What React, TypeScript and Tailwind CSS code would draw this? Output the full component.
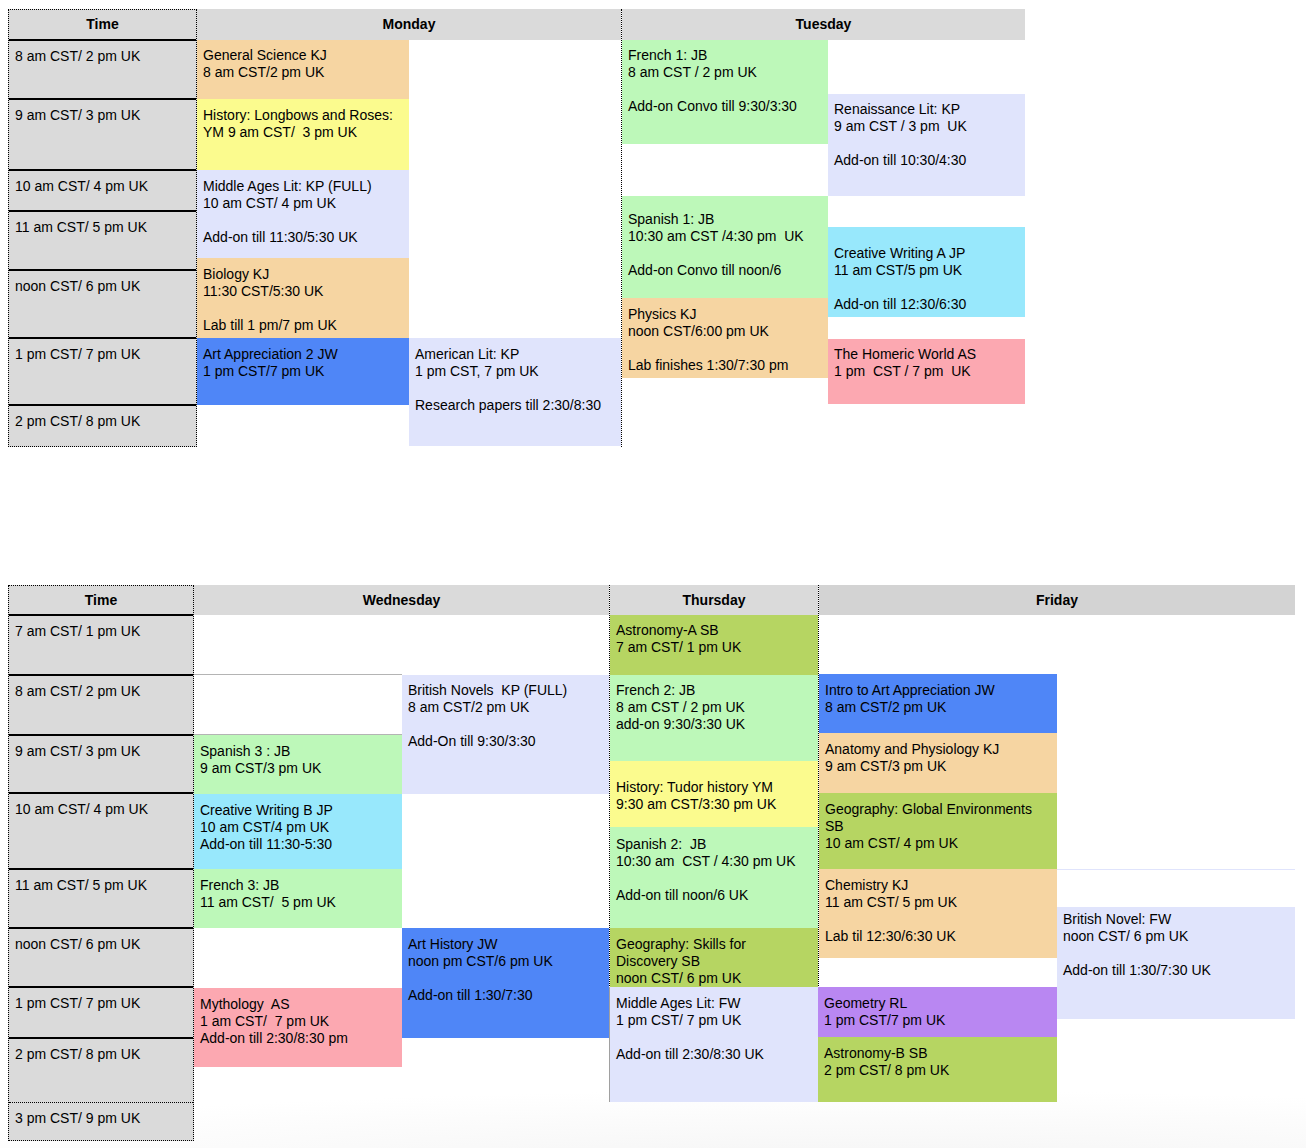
/**
 * Weekly class timetable (CST / UK times), two sheets:
 * Monday-Tuesday on top, Wednesday-Friday below.
 */

// cell colours
const orange = "bg-[#f6d5a2]";
const yellow = "bg-[#fbfb8e]";
const lavender = "bg-[#e0e4fc]";
const blue = "bg-[#4f86f7]";
const green = "bg-[#bdf8b9]";
const cyan = "bg-[#98e8fc]";
const pink = "bg-[#fca8b1]";
const olive = "bg-[#b6d562]";
const purple = "bg-[#b987f2]";

interface Cell {
  cls: string;
  text?: string;
}

interface TimeRow {
  cls: string;
  label: string;
}

// ============================
// top sheet data
// ============================
const topTimes: TimeRow[] = [
  { cls: "h-[59px] border-t-2", label: "8 am CST/ 2 pm UK" },
  { cls: "h-[71px] border-t-2", label: "9 am CST/ 3 pm UK" },
  { cls: "h-[41px] border-t-2", label: "10 am CST/ 4 pm UK" },
  { cls: "h-[59px] border-t-2", label: "11 am CST/ 5 pm UK" },
  { cls: "h-[68px] border-t-2", label: "noon CST/ 6 pm UK" },
  { cls: "h-[67px] border-t-2", label: "1 pm CST/ 7 pm UK" },
  { cls: "h-[42px] border-t-2", label: "2 pm CST/ 8 pm UK" },
];

const mondayA: Cell[] = [
  { cls: `h-[59px] pt-[7px] ${orange}`, text: "General Science KJ\n8 am CST/2 pm UK" },
  { cls: `h-[71px] pt-[8px] ${yellow}`, text: "History: Longbows and Roses:\nYM 9 am CST/  3 pm UK" },
  { cls: `h-[88px] pt-[8px] ${lavender}`, text: "Middle Ages Lit: KP (FULL)\n10 am CST/ 4 pm UK\n\nAdd-on till 11:30/5:30 UK" },
  { cls: `h-[80px] pt-[8px] ${orange}`, text: "Biology KJ\n11:30 CST/5:30 UK\n\nLab till 1 pm/7 pm UK" },
  { cls: `h-[67px] pt-[8px] ${blue}`, text: "Art Appreciation 2 JW\n1 pm CST/7 pm UK" },
];

const mondayB: Cell[] = [
  { cls: "h-[298px]" },
  { cls: `h-[108px] pt-[8px] ${lavender}`, text: "American Lit: KP\n1 pm CST, 7 pm UK\n\nResearch papers till 2:30/8:30" },
];

const tuesdayA: Cell[] = [
  { cls: `h-[104px] pt-[7px] ${green}`, text: "French 1: JB\n8 am CST / 2 pm UK\n\nAdd-on Convo till 9:30/3:30" },
  { cls: "h-[52px]" },
  { cls: `h-[102px] pt-[15px] ${green}`, text: "Spanish 1: JB\n10:30 am CST /4:30 pm  UK\n\nAdd-on Convo till noon/6" },
  { cls: `h-[80px] pt-[8px] ${orange}`, text: "Physics KJ\nnoon CST/6:00 pm UK\n\nLab finishes 1:30/7:30 pm" },
];

const tuesdayB: Cell[] = [
  { cls: "h-[54px]" },
  { cls: `h-[102px] pt-[7px] ${lavender}`, text: "Renaissance Lit: KP\n9 am CST / 3 pm  UK\n\nAdd-on till 10:30/4:30" },
  { cls: "h-[31px]" },
  { cls: `h-[90px] pt-[18px] ${cyan}`, text: "Creative Writing A JP\n11 am CST/5 pm UK\n\nAdd-on till 12:30/6:30" },
  { cls: "h-[22px]" },
  { cls: `h-[65px] pt-[7px] ${pink}`, text: "The Homeric World AS\n1 pm  CST / 7 pm  UK" },
];

// ============================
// bottom sheet data
// ============================
const bottomTimes: TimeRow[] = [
  { cls: "h-[60px] border-t-2", label: "7 am CST/ 1 pm UK" },
  { cls: "h-[60px] border-t-2", label: "8 am CST/ 2 pm UK" },
  { cls: "h-[58px] border-t-2", label: "9 am CST/ 3 pm UK" },
  { cls: "h-[76px] border-t-2", label: "10 am CST/ 4 pm UK" },
  { cls: "h-[59px] border-t-2", label: "11 am CST/ 5 pm UK" },
  { cls: "h-[59px] border-t-2", label: "noon CST/ 6 pm UK" },
  { cls: "h-[51px] border-t-2", label: "1 pm CST/ 7 pm UK" },
  { cls: "h-[65px] border-t-2", label: "2 pm CST/ 8 pm UK" },
  { cls: "h-[38px] border-t border-dotted", label: "3 pm CST/ 9 pm UK" },
];

const wednesdayA: Cell[] = [
  { cls: "h-[60px] border-b border-[#b4b4b4]" },
  { cls: "h-[60px] border-b border-[#b4b4b4]" },
  { cls: `h-[59px] pt-[8px] ${green}`, text: "Spanish 3 : JB\n9 am CST/3 pm UK" },
  { cls: `h-[75px] pt-[8px] ${cyan}`, text: "Creative Writing B JP\n10 am CST/4 pm UK\nAdd-on till 11:30-5:30" },
  { cls: `h-[59px] pt-[8px] ${green}`, text: "French 3: JB\n11 am CST/  5 pm UK" },
  { cls: "h-[60px]" },
  { cls: `h-[79px] pt-[8px] ${pink}`, text: "Mythology  AS\n1 am CST/  7 pm UK\nAdd-on till 2:30/8:30 pm" },
];

const wednesdayB: Cell[] = [
  { cls: "h-[60px]" },
  { cls: `h-[119px] pt-[7px] ${lavender}`, text: "British Novels  KP (FULL)\n8 am CST/2 pm UK\n\nAdd-On till 9:30/3:30" },
  { cls: "h-[134px]" },
  { cls: `h-[110px] pt-[8px] ${blue}`, text: "Art History JW\nnoon pm CST/6 pm UK\n\nAdd-on till 1:30/7:30" },
];

const thursday: Cell[] = [
  { cls: `h-[60px] pt-[7px] ${olive}`, text: "Astronomy-A SB\n7 am CST/ 1 pm UK" },
  { cls: `h-[86px] pt-[7px] ${green}`, text: "French 2: JB\n8 am CST / 2 pm UK\nadd-on 9:30/3:30 UK" },
  { cls: `h-[66px] pt-[18px] ${yellow}`, text: "History: Tudor history YM\n9:30 am CST/3:30 pm UK" },
  { cls: `h-[101px] pt-[9px] ${green}`, text: "Spanish 2:  JB\n10:30 am  CST / 4:30 pm UK\n\nAdd-on till noon/6 UK" },
  { cls: `h-[59px] pt-[8px] ${olive}`, text: "Geography: Skills for\nDiscovery SB\nnoon CST/ 6 pm UK" },
  { cls: `h-[115px] pt-[8px] -ml-px border-l border-solid border-[#a0a0a0] ${lavender}`, text: "Middle Ages Lit: FW\n1 pm CST/ 7 pm UK\n\nAdd-on till 2:30/8:30 UK" },
];

const fridayA: Cell[] = [
  { cls: "h-[59px]" },
  { cls: `h-[59px] pt-[8px] ${blue}`, text: "Intro to Art Appreciation JW\n8 am CST/2 pm UK" },
  { cls: `h-[60px] pt-[8px] ${orange}`, text: "Anatomy and Physiology KJ\n9 am CST/3 pm UK" },
  { cls: `h-[76px] pt-[8px] ${olive}`, text: "Geography: Global Environments\nSB\n10 am CST/ 4 pm UK" },
  { cls: `h-[89px] pt-[8px] ${orange}`, text: "Chemistry KJ\n11 am CST/ 5 pm UK\n\nLab til 12:30/6:30 UK" },
  { cls: "h-[29px]" },
  { cls: `h-[50px] pt-[8px] -ml-px ${purple}`, text: "Geometry RL\n1 pm CST/7 pm UK" },
  { cls: `h-[65px] pt-[8px] -ml-px ${olive}`, text: "Astronomy-B SB\n2 pm CST/ 8 pm UK" },
];

const fridayB: Cell[] = [
  { cls: "h-[255px] border-b border-[#e0e4fc]" },
  { cls: "h-[37px]" },
  { cls: `h-[112px] pt-[4px] ${lavender}`, text: "British Novel: FW\nnoon CST/ 6 pm UK\n\nAdd-on till 1:30/7:30 UK" },
];

// ============================
// pieces
// ============================
function Stack({ cells, className }: { cells: Cell[]; className: string }) {
  return (
    <div className={`flex flex-col ${className}`}>
      {cells.map((c, i) => (
        <div
          key={i}
          className={`shrink-0 overflow-hidden whitespace-pre px-[6px] text-[14px] leading-[17px] ${c.cls}`}
        >
          {c.text}
        </div>
      ))}
    </div>
  );
}

function TimeColumn({ rows, className, headerCls }: { rows: TimeRow[]; className: string; headerCls: string }) {
  return (
    <div className={`flex shrink-0 flex-col border border-dotted border-black bg-[#dadada] ${className}`}>
      <div className={`flex items-center justify-center text-[14px] font-bold ${headerCls}`}>Time</div>
      {rows.map((r) => (
        <div key={r.label} className={`border-black pl-[6px] pt-[7px] text-[14px] leading-[17px] ${r.cls}`}>
          {r.label}
        </div>
      ))}
    </div>
  );
}

function DayHeader({ label, className }: { label: string; className: string }) {
  return (
    <div className={`flex shrink-0 items-center justify-center text-[14px] font-bold ${className}`}>
      {label}
    </div>
  );
}

export default function App() {
  return (
    <div className="min-h-[1148px] bg-[radial-gradient(ellipse_1100px_80px_at_850px_1170px,#f4f4f4,#ffffff)] pl-2 pt-[9px] font-['Liberation_Sans',Arial,sans-serif] text-black">
      {/* Monday / Tuesday */}
      <div className="flex">
        <TimeColumn rows={topTimes} className="w-[189px]" headerCls="h-[29px]" />

        <div className="flex w-[424px] flex-col">
          <DayHeader label="Monday" className="h-[31px] bg-[#dadada]" />
          <div className="flex">
            <Stack cells={mondayA} className="w-[212px]" />
            <Stack cells={mondayB} className="w-[212px]" />
          </div>
        </div>

        <div className="flex w-[404px] flex-col border-l border-dotted border-black">
          <DayHeader label="Tuesday" className="h-[31px] bg-[#dadada]" />
          <div className="flex">
            <Stack cells={tuesdayA} className="w-[206px]" />
            <Stack cells={tuesdayB} className="w-[197px]" />
          </div>
        </div>
      </div>

      {/* Wednesday / Thursday / Friday */}
      <div className="mt-[138px] flex items-start">
        <TimeColumn rows={bottomTimes} className="w-[186px]" headerCls="h-[28px]" />

        <div className="flex w-[415px] flex-col">
          <DayHeader label="Wednesday" className="h-[30px] bg-[#dadada]" />
          <div className="flex">
            <Stack cells={wednesdayA} className="w-[208px]" />
            <Stack cells={wednesdayB} className="w-[207px]" />
          </div>
        </div>

        <div className="flex w-[209px] flex-col border-l border-dotted border-black">
          <DayHeader label="Thursday" className="h-[30px] bg-[#dadada]" />
          <Stack cells={thursday} className="w-[208px]" />
        </div>

        <div className="flex w-[477px] flex-col border-l border-dotted border-black">
          <DayHeader label="Friday" className="h-[30px] bg-[#d3d3d3]" />
          <div className="flex">
            <Stack cells={fridayA} className="w-[238px]" />
            <Stack cells={fridayB} className="w-[238px]" />
          </div>
        </div>
      </div>
    </div>
  );
}
